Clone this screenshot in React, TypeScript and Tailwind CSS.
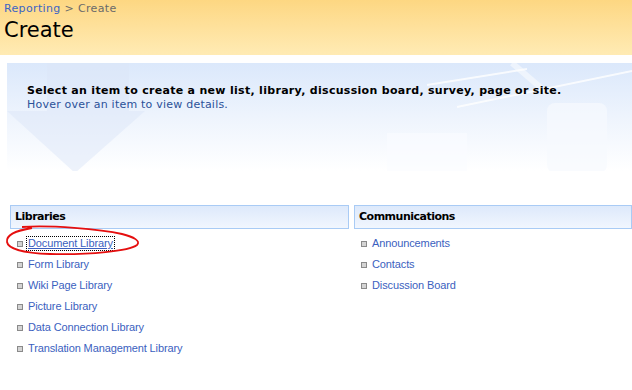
import React from "react";

const libs = [
  "Document Library",
  "Form Library",
  "Wiki Page Library",
  "Picture Library",
  "Data Connection Library",
  "Translation Management Library",
];
const comms = ["Announcements", "Contacts", "Discussion Board"];

function Bullet() {
  return <span className="inline-block w-[6px] h-[6px] border border-[#8a8a8a] bg-[#d4d4d4] shrink-0" />;
}

function Item({ label, focus }: { label: string; focus?: boolean }) {
  return (
    <div className="flex items-center h-[21px] pl-[7px] gap-[5px]">
      <Bullet />
      <span
        className={
          "text-[11px] leading-[13px] text-[#3b5fc0] tracking-[-0.12px] " +
          (focus ? "outline outline-1 outline-dotted outline-black outline-offset-0 underline px-[1px] -ml-[1px]" : "")
        }
      >
        {label}
      </span>
    </div>
  );
}

function Header({ title }: { title: string }) {
  return (
    <div className="h-[24px] border border-[#a9cbf5] bg-gradient-to-b from-[#dde9fb] to-[#f1f6fe] flex items-center pl-[4px] text-[11px] font-bold text-black font-['DejaVu_Sans',sans-serif] tracking-[-0.5px]">
      {title}
    </div>
  );
}

export default function App() {
  return (
    <div className="w-[632px] h-[390px] bg-white overflow-hidden relative font-['Liberation_Sans',Arial,sans-serif]">
      <div className="h-[55px] bg-gradient-to-b from-[#fdd782] to-[#ffebb4] pl-[4px] pt-[2px]">
        <div className="text-[11px] leading-[14px] font-['DejaVu_Sans',sans-serif] tracking-[0.35px]">
          <span className="text-[#3c64c4]">Reporting</span>
          <span className="text-[#6a6a6a]"> &gt; Create</span>
        </div>
        <div className="text-[21px] leading-[26px] text-black font-['DejaVu_Sans',sans-serif] mt-[1px]">Create</div>
      </div>
      <div className="relative ml-[7px] mt-[8px] h-[108px] bg-gradient-to-b from-[#dbe8fb] via-[#eef4fd] to-white overflow-hidden">
        <svg className="absolute left-0 top-0" width="625" height="110" viewBox="0 0 625 110">
          <path d="M40 0 L122 0 L122 48 L138 48 L68 110 L0 48 L40 48 Z" fill="#dbe6f8" opacity="0.5" />
          <path d="M420 22 L520 6 M450 44 L625 8" stroke="#ffffff" strokeWidth="2" opacity="0.8" />
          <path d="M505 0 L540 30" stroke="#ffffff" strokeWidth="6" opacity="0.5" />
          <rect x="540" y="40" width="60" height="70" rx="8" fill="#f6f9fe" opacity="0.7" />
          <rect x="380" y="70" width="80" height="40" fill="#fafcff" opacity="0.6" />
        </svg>
        <div className="relative pl-[20px] pt-[21px]">
          <div className="text-[11px] leading-[14px] font-bold text-black font-['DejaVu_Sans',sans-serif] tracking-[0.3px]">
            Select an item to create a new list, library, discussion board, survey, page or site.
          </div>
          <div className="text-[11px] leading-[14px] text-[#2b5199] font-['DejaVu_Sans',sans-serif] tracking-[0.22px]">
            Hover over an item to view details.
          </div>
        </div>
      </div>
      <div className="flex gap-[5px] pl-[10px] mt-[34px]">
        <div className="w-[339px]">
          <Header title="Libraries" />
          <div className="pt-[4px]">
            {libs.map((l, i) => (
              <Item key={l} label={l} focus={i === 0} />
            ))}
          </div>
        </div>
        <div className="flex-1">
          <Header title="Communications" />
          <div className="pt-[4px]">
            {comms.map((l) => (
              <Item key={l} label={l} />
            ))}
          </div>
        </div>
      </div>
      <svg className="absolute left-0 top-0 pointer-events-none" width="632" height="390">
        <path
          d="M22 227 C50 225 100 229 122 234 C134 237 141 241 137 245 C129 251 90 255 50 254 C25 253 8 249 7 242 C6 235 14 231 32 228"
          fill="none"
          stroke="#e50f0f"
          strokeWidth="1.8"
        />
      </svg>
    </div>
  );
}
